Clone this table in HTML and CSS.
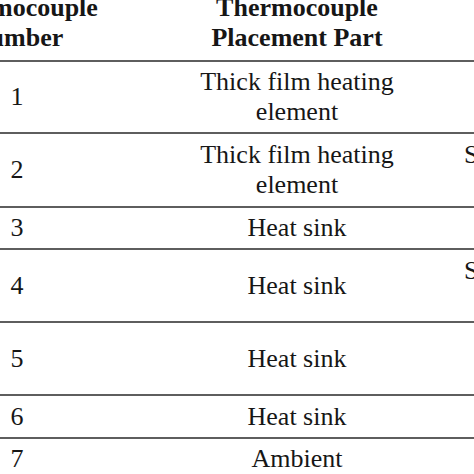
FILE: index.html
```html
<!DOCTYPE html>
<html lang="en">
<head>
<meta charset="utf-8">
<title>Thermocouple placement</title>
<link rel="stylesheet" href="styles.css">
</head>
<body>
<div class="table">
  <div class="row head">
    <div class="cell">Thermocouple<br>Number</div>
    <div class="cell">Thermocouple<br>Placement Part</div>
    <div class="cell side">Thermocouple<br>Location</div>
  </div>
  <div class="row h70">
    <div class="cell">1</div>
    <div class="cell">Thick film heating<br>element</div>
    <div class="cell side"></div>
  </div>
  <div class="row h72">
    <div class="cell">2</div>
    <div class="cell">Thick film heating<br>element</div>
    <div class="cell side top">Surface</div>
  </div>
  <div class="row h40">
    <div class="cell">3</div>
    <div class="cell">Heat sink</div>
    <div class="cell side"></div>
  </div>
  <div class="row h71">
    <div class="cell">4</div>
    <div class="cell">Heat sink</div>
    <div class="cell side top">Surface</div>
  </div>
  <div class="row h71">
    <div class="cell">5</div>
    <div class="cell">Heat sink</div>
    <div class="cell side"></div>
  </div>
  <div class="row h41">
    <div class="cell">6</div>
    <div class="cell">Heat sink</div>
    <div class="cell side"></div>
  </div>
  <div class="row last">
    <div class="cell">7</div>
    <div class="cell">Ambient</div>
    <div class="cell side"></div>
  </div>
</div>
</body>
</html>
```
FILE: styles.css
```css
html, body {
  margin: 0;
  padding: 0;
  background: #ffffff;
  overflow: hidden;
}
body {
  width: 474px;
  height: 474px;
}
.table {
  margin-left: -96px;
  margin-top: -7px;
  width: 700px;
  font-family: "Liberation Serif", "Times New Roman", serif;
  font-size: 26px;
  line-height: 30px;
  color: #161616;
}
.row {
  display: grid;
  grid-template-columns: 226px 334px 1fr;
  align-items: center;
  border-bottom: 2px solid #5e5e5e;
}
.row.last {
  border-bottom: none;
  height: 60px;
  align-items: start;
}
.row.last .cell {
  padding-top: 5px;
}
.head {
  font-weight: bold;
  height: 60px;
  padding-bottom: 7px;
  align-items: end;
}
.cell {
  text-align: center;
  white-space: nowrap;
}
.cell.side {
  text-align: left;
}
.cell.side.top {
  align-self: start;
  padding-top: 6px;
}
.head .cell.side {
  padding-left: 40px;
}
.h70 { height: 70px; }
.h72 { height: 72px; }
.h40 { height: 40px; }
.h71 { height: 71px; }
.h41 { height: 41px; }
```
